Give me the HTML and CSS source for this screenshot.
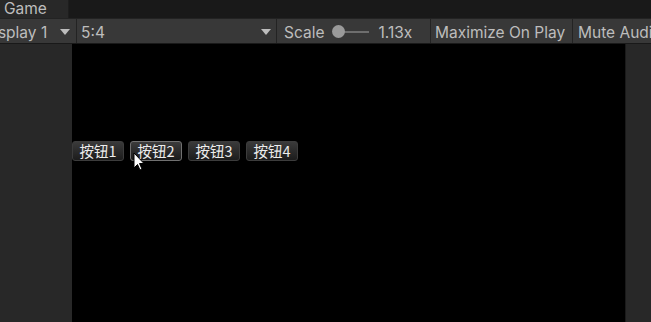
FILE: index.html
```html
<!DOCTYPE html>
<html lang="en">
<head>
    <meta charset="UTF-8">
    <title>Game</title>
    <link rel="stylesheet" href="styles.css">
</head>
<body>
    <div id="tabbar">
        <div class="tab">Game</div>
    </div>
    <div id="toolbar">
        <div class="tool display"><span class="label">Display 1</span><span class="arrow"></span></div>
        <div class="tool aspect"><span class="label">5:4</span><span class="arrow"></span></div>
        <div class="tool scale">Scale <span class="slider"><span class="knob"></span></span> 1.13x</div>
        <div class="tool maximize">Maximize On Play</div>
        <div class="tool mute">Mute Audio</div>
    </div>
    <div id="main">
        <div class="side left"></div>
        <div id="view">
            <div class="buttons">
                <button class="gbtn">按钮1</button>
                <button class="gbtn hover">按钮2</button>
                <button class="gbtn">按钮3</button>
                <button class="gbtn">按钮4</button>
            </div>
            <svg class="cursor" width="12" height="20" viewBox="0 0 12 20">
                <path d="M1 1 L1 16 L4.5 12.5 L7 18 L9 17 L6.5 11.5 L11 11.5 Z" fill="#fff" stroke="#000" stroke-width="1"/>
            </svg>
        </div>
        <div class="side right"></div>
    </div>
</body>
</html>
```
FILE: styles.css
```css
* {
    box-sizing: border-box;
}
body, html {
    margin: 0;
    padding: 0;
    width: 651px;
    height: 322px;
    overflow: hidden;
    background-color: #191919;
    font-family: 'Inter', 'Noto Sans CJK SC', sans-serif;
    color: #bdbdbd;
}
#tabbar {
    height: 19px;
    background-color: #191919;
    border-bottom: 1px solid #232323;
    display: flex;
}
.tab {
    width: 69px;
    padding-left: 4px;
    background-color: #282828;
    font-size: 15.5px;
    line-height: 17px;
    border-right: 1px solid #1e1e1e;
}
#toolbar {
    height: 25px;
    background-color: #383838;
    border-bottom: 1px solid #191919;
    display: flex;
    white-space: nowrap;
    overflow: hidden;
    font-size: 15.5px;
}
.tool {
    display: flex;
    align-items: center;
    gap: 6px;
    padding: 2px 5px 0;
    border-right: 1px solid #232323;
    flex-shrink: 0;
}
.display {
    margin-left: -17px;
    width: 94px;
    padding: 2px 6px 0 0;
    justify-content: space-between;
}
.aspect {
    width: 200px;
    padding: 2px 5px 0 4px;
    justify-content: space-between;
}
.arrow {
    width: 0;
    height: 0;
    border-left: 5.5px solid transparent;
    border-right: 5.5px solid transparent;
    border-top: 6px solid #bdbdbd;
}
.scale {
    width: 154px;
    padding: 2px 7px 0;
    gap: 8px;
}
.slider {
    position: relative;
    width: 30px;
    height: 2px;
    background-color: #6e6e6e;
    margin-left: 7px;
    margin-right: 1px;
}
.knob {
    position: absolute;
    left: -7px;
    top: -6px;
    width: 13px;
    height: 13px;
    border-radius: 50%;
    background-color: #9a9a9a;
}
.maximize {
    width: 142px;
    padding-left: 4px;
}
.mute {
    padding-left: 5px;
}
#main {
    display: flex;
    height: 278px;
}
.side {
    background-color: #282828;
}
.left {
    width: 72px;
}
.right {
    width: 26px;
    border-left: 1px solid #1a1a1a;
}
#view {
    position: relative;
    flex: 1;
    background-color: #000;
}
.buttons {
    display: flex;
    gap: 6px;
    margin-top: 97px;
}
.gbtn {
    height: 20px;
    width: 52px;
    padding: 0;
    font-family: 'Noto Sans CJK SC', sans-serif;
    font-size: 14.5px;
    line-height: 18px;
    color: #ececec;
    background: linear-gradient(#3a3a3a, #1c1c1c);
    border: 1px solid #3c3c3c;
    border-radius: 3px;
}
.gbtn.hover {
    border-color: #707070;
    background: linear-gradient(#3c3c3c, #1a1a1a);
}
.cursor {
    position: absolute;
    left: 61px;
    top: 108px;
}
```
